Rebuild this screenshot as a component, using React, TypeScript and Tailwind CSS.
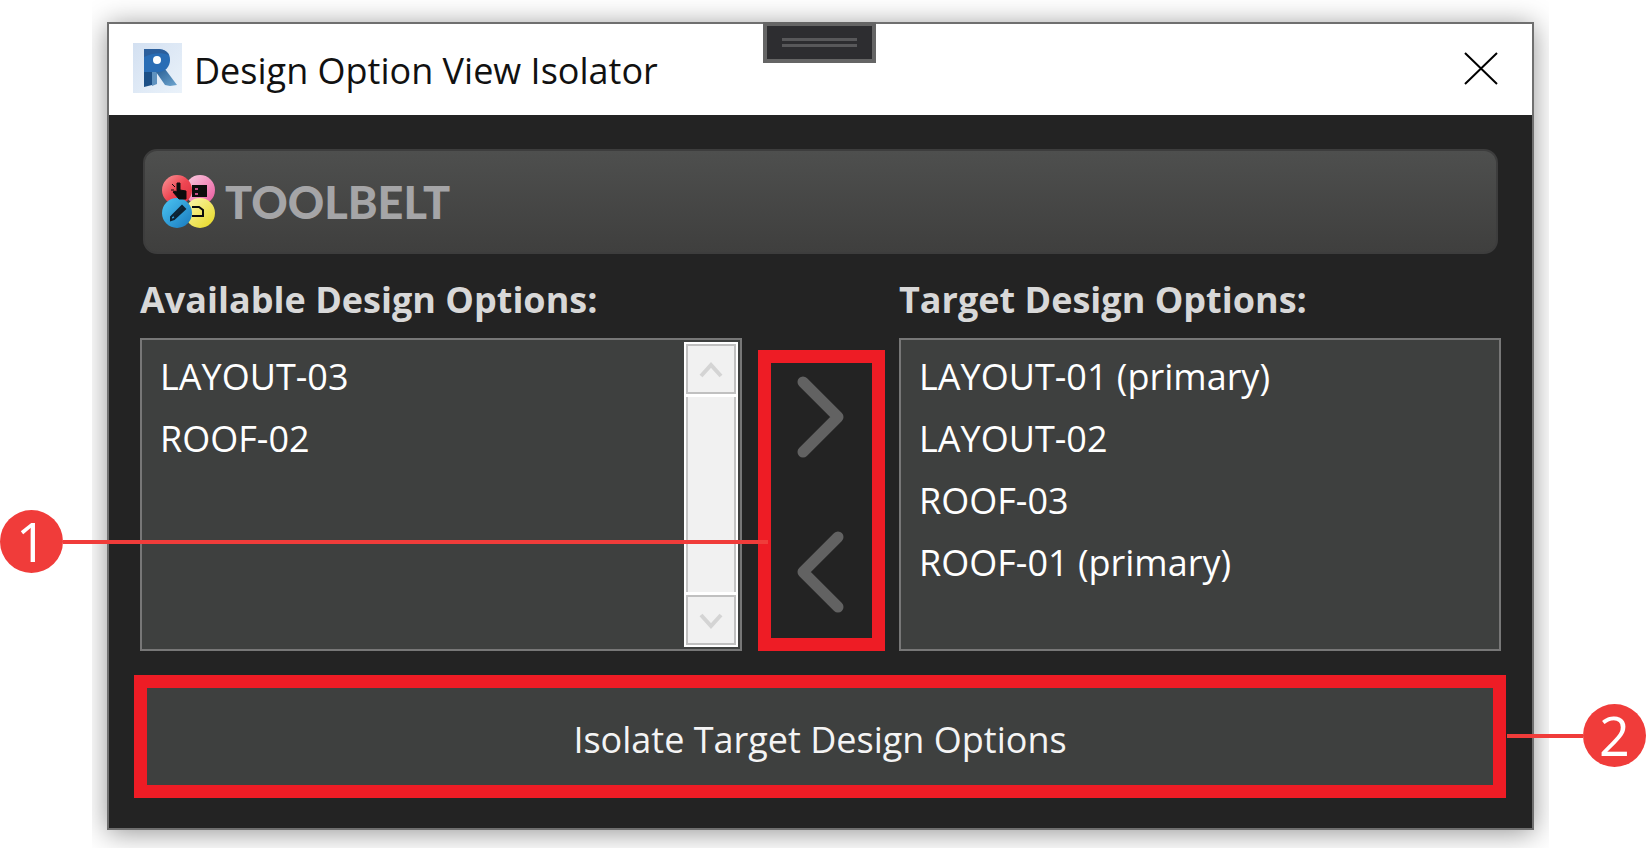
import { useState } from 'react';
import clsx from 'clsx';

const AVAILABLE = ['LAYOUT-03', 'ROOF-02'];
const TARGET = ['LAYOUT-01 (primary)', 'LAYOUT-02', 'ROOF-03', 'ROOF-01 (primary)'];

export default function App() {
  const [available, setAvailable] = useState(AVAILABLE);
  const [target, setTarget] = useState(TARGET);
  const [picked, setPicked] = useState<string | null>(null);

  const toTarget = () => {
    if (!picked || !available.includes(picked)) return;
    setAvailable(available.filter((o) => o !== picked));
    setTarget([...target, picked]);
  };

  const toAvailable = () => {
    if (!picked || !target.includes(picked)) return;
    setTarget(target.filter((o) => o !== picked));
    setAvailable([...available, picked]);
  };

  return (
    <main className="bg-white pt-[22px] pr-[112px] pb-[18px] pl-[107px] font-['Open_Sans','Noto_Sans',sans-serif]">
      <div className="relative isolate">
        <WindowShadow />
        <div className="border-2 border-[#6f6f6f] bg-[#232323]">
          <TitleBar />
          <div className="px-[31px] pt-[34px] pb-[30px]">
            <Banner />
            <div className="relative mt-[22px] flex">
              <OptionList
                id="available"
                label="Available Design Options:"
                options={available}
                picked={picked}
                onPick={setPicked}
                scrollbar
              />
              <div className="flex w-[157px] shrink-0 flex-col pt-[74px] pr-[14px] pl-4">
                <div className="flex flex-1 flex-col items-center justify-between border-[13px] border-[#ee1c25] pt-[7px] pr-[2px] pb-[19px]">
                  <MoveButton label="Add to target" points="6,6 41,41 6,76" onClick={toTarget} />
                  <MoveButton label="Remove from target" points="41,6 6,41 41,76" onClick={toAvailable} />
                </div>
              </div>
              <OptionList
                id="target"
                label="Target Design Options:"
                options={target}
                picked={picked}
                onPick={setPicked}
              />
              <div className="absolute right-[calc(50%+53px)] bottom-[78px] left-[-140px] flex items-center">
                <Badge n={1} />
                <span className="h-1 flex-1 bg-[#f03c3a]" />
              </div>
            </div>
            <div className="relative mt-6 -mr-[5px] -ml-[6px]">
              <button
                type="button"
                className="block h-[123px] w-full border-[13px] border-[#ee1c25] bg-[#3e403f] pt-[7px] text-[36px] leading-[48px] text-[#f4f4f4]"
              >
                Isolate Target Design Options
              </button>
              <div className="absolute top-[29px] left-[calc(100%+1px)] flex w-[139px] items-center">
                <span className="h-1 flex-1 bg-[#f03c3a]" />
                <Badge n={2} />
              </div>
            </div>
          </div>
        </div>
      </div>
    </main>
  );
}

function WindowShadow() {
  return (
    <div className="absolute -inset-x-[15px] -top-[22px] -bottom-[18px] -z-10 overflow-hidden px-[15px] pt-[22px] pb-[18px]">
      <div className="h-full shadow-[0_3px_26px_rgba(0,0,0,0.42)]" />
    </div>
  );
}

function TitleBar() {
  return (
    <header className="relative flex h-[91px] items-center bg-white pr-[34px] pl-6">
      <RevitIcon />
      <h1 className="ml-3 flex-1 pt-[2px] text-[36px] leading-[48px] text-[#111]">Design Option View Isolator</h1>
      <button type="button" aria-label="Close" className="pb-[2px] text-black">
        <svg width="34" height="34" viewBox="0 0 34 34" fill="none" stroke="currentColor" strokeWidth="2">
          <path d="M1 1 33 32M33 1 1 32" />
        </svg>
      </button>
      {/* debug toolbar handle docked to the top edge */}
      <div className="absolute -top-[2px] left-1/2 -ml-[58px] flex h-[41px] w-[113px] flex-col items-center justify-center gap-[3px] border-4 border-[#656565] bg-[#2d2d30]">
        <span className="h-[3px] w-[75px] bg-[#58585a]" />
        <span className="h-[3px] w-[75px] bg-[#58585a]" />
      </div>
    </header>
  );
}

function RevitIcon() {
  return (
    <svg width="49" height="50" viewBox="0 0 49 50" className="mb-1" aria-hidden="true">
      <defs>
        <linearGradient id="r-bg" x1="0" y1="0" x2="1" y2="1">
          <stop offset="0" stopColor="#d3e0f1" />
          <stop offset="1" stopColor="#eaf2fa" />
        </linearGradient>
        <linearGradient id="r-leg" x1="0" y1="0" x2="1" y2="1">
          <stop offset="0" stopColor="#245a90" />
          <stop offset="1" stopColor="#6fa6d0" />
        </linearGradient>
      </defs>
      <rect width="49" height="50" fill="url(#r-bg)" />
      <path d="M11 24h8v18l-8 2z" fill="#1c4f86" />
      <path d="M19 27h5v14l-5 2z" fill="#5f92bf" />
      <path d="M21 26h11l12 16-7 1-5-1z" fill="url(#r-leg)" />
      <path d="M11 6h13c9 0 13 4 13 11s-5 12-12 12H11z" fill="#2a6db5" />
      <path d="M11 6h13c6 0 10 2 12 6-8-3-17-2-25 2z" fill="#2c5f9c" />
      <circle cx="24" cy="17" r="4" fill="#fff" />
    </svg>
  );
}

function Banner() {
  return (
    <div className="mx-[3px] flex h-[105px] items-center rounded-[14px] border-2 border-[#3d3d3d] bg-linear-to-b from-[#4e4f4e] to-[#3f3f3e] pl-[17px]">
      <ToolbeltIcon />
      <span className="ml-[10px] font-['Lato','Open_Sans',sans-serif] text-[45px] leading-[56px] font-black text-[#a5a5a7]">
        TOOLBELT
      </span>
    </div>
  );
}

function ToolbeltIcon() {
  return (
    <svg width="53" height="53" viewBox="0 0 53 53" aria-hidden="true">
      <defs>
        <linearGradient id="tb-red" x1="0" y1="0" x2="1" y2="1">
          <stop offset="0" stopColor="#f79a9c" />
          <stop offset="0.5" stopColor="#ef4652" />
          <stop offset="1" stopColor="#d92b3c" />
        </linearGradient>
        <linearGradient id="tb-pink" x1="0" y1="0" x2="1" y2="1">
          <stop offset="0" stopColor="#fbd0e2" />
          <stop offset="1" stopColor="#e8559c" />
        </linearGradient>
        <linearGradient id="tb-blue" x1="0" y1="0" x2="1" y2="1">
          <stop offset="0" stopColor="#4cc6f4" />
          <stop offset="1" stopColor="#1878bd" />
        </linearGradient>
        <linearGradient id="tb-yellow" x1="0" y1="0" x2="1" y2="1">
          <stop offset="0" stopColor="#fbf8b4" />
          <stop offset="1" stopColor="#e6d71f" />
        </linearGradient>
      </defs>
      <circle cx="38" cy="15" r="15" fill="url(#tb-pink)" />
      <circle cx="15" cy="15" r="15" fill="url(#tb-red)" />
      <circle cx="38" cy="38" r="15" fill="url(#tb-yellow)" />
      <circle cx="15" cy="38" r="15" fill="url(#tb-blue)" />
      <path d="M15 8h3v7l6 1v8h-7l-6-7 2-1 2 1zM10 9l3 3M9 15h3" fill="#0c0c0c" stroke="#0c0c0c" />
      <path d="M30 10h15v12H30z" fill="#0c0c0c" />
      <path d="M33 13h3v2h-3zM33 18h3v2h-3z" fill="#c24d84" />
      <path d="M9 42 20 31l3 3-11 10-3 1zM12 42l9-9" fill="none" stroke="#0c2233" strokeWidth="2" />
      <path d="M30 32h7l4 3v6H30" fill="none" stroke="#0c0c0c" strokeWidth="2" />
    </svg>
  );
}

interface OptionListProps {
  id: string;
  label: string;
  options: string[];
  picked: string | null;
  onPick: (option: string) => void;
  scrollbar?: boolean;
}

function OptionList({ id, label, options, picked, onPick, scrollbar }: OptionListProps) {
  return (
    <section className="min-w-0 flex-1">
      <h2 id={id} className="mb-[14px] text-[36px] leading-[48px] font-bold whitespace-nowrap text-[#d8d8d8]">
        {label}
      </h2>
      <div className="flex h-[313px] border-2 border-[#777] bg-[#3e403f] p-[2px]">
        <ul role="listbox" aria-labelledby={id} className="flex-1 pt-1">
          {options.map((o) => (
            <li
              key={o}
              role="option"
              aria-selected={o === picked}
              onClick={() => onPick(o)}
              className={clsx(
                'h-[62px] cursor-default pl-4 text-[36px] leading-[62px] text-white',
                o === picked && 'bg-[#5a5a5a]'
              )}
            >
              {o}
            </li>
          ))}
        </ul>
        {scrollbar && <ScrollBar />}
      </div>
    </section>
  );
}

function ScrollBar() {
  return (
    <div className="flex w-[54px] flex-col gap-[3px] bg-white p-[2px]">
      <ScrollButton label="Scroll up" points="2,16 12,5 22,16" />
      <div className="flex-1 border-x-2 border-[#c4c4c4] bg-[#f1f1f1]" />
      <ScrollButton label="Scroll down" points="2,4 12,15 22,4" />
    </div>
  );
}

function ScrollButton({ label, points }: { label: string; points: string }) {
  return (
    <button
      type="button"
      aria-label={label}
      className="flex h-[50px] items-center justify-center border-2 border-[#c0c0c0] bg-[#f1f1f1]"
    >
      <svg width="24" height="19" viewBox="0 0 24 19" fill="none" stroke="#d4d4d4" strokeWidth="4">
        <polyline points={points} />
      </svg>
    </button>
  );
}

function MoveButton({ label, points, onClick }: { label: string; points: string; onClick: () => void }) {
  return (
    <button type="button" aria-label={label} onClick={onClick} className="px-6 py-[6px]">
      <svg
        width="47"
        height="82"
        viewBox="0 0 47 82"
        fill="none"
        stroke="#626262"
        strokeWidth="11"
        strokeLinecap="round"
        strokeLinejoin="round"
      >
        <polyline points={points} />
      </svg>
    </button>
  );
}

function Badge({ n }: { n: number }) {
  return (
    <span className="flex size-[63px] shrink-0 items-center justify-center rounded-full bg-[#f03c3a] text-[54px] leading-[63px] font-medium text-white">
      {n}
    </span>
  );
}
